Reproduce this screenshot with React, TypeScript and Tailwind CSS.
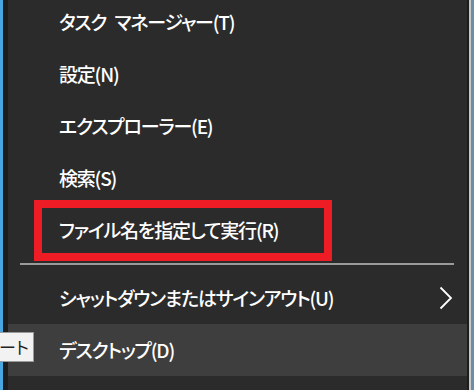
import React from "react";

interface MenuItem {
    label: string;
    submenu?: boolean;
    active?: boolean;
}

const topItems: MenuItem[] = [
    { label: "タスク\u2002マネージャー(T)" },
    { label: "設定(N)" },
    { label: "エクスプローラー(E)" },
    { label: "検索(S)" },
    { label: "ファイル名を指定して実行(R)" },
];

const bottomItems: MenuItem[] = [
    { label: "シャットダウンまたはサインアウト(U)", submenu: true },
    { label: "デスクトップ(D)", active: true },
];

function Row({ item }: { item: MenuItem }) {
    return (
        <div
            className={`flex h-[52px] items-center justify-between pl-[51px] pr-[14px] ${item.active ? "bg-[#3e3e3e]" : ""
                }`}
        >
            <span className="whitespace-nowrap">{item.label}</span>
            {item.submenu && (
                <svg width="14" height="24" viewBox="0 0 14 24" fill="none" className="shrink-0">
                    <path d="M1.5 1.5 L12 12 L1.5 22.5" stroke="#ffffff" strokeWidth="1.8" />
                </svg>
            )}
        </div>
    );
}

export default function App() {
    return (
        <div className="relative flex h-[390px] w-[474px] overflow-hidden bg-[#2b2b2b] font-['Noto_Sans_CJK_JP',sans-serif] text-[19px] font-medium tracking-[-1.2px] text-white [font-feature-settings:'palt']">
            {/* left window edge */}
            <div className="w-[3px] bg-[#4aa6e0]" />

            {/* context menu */}
            <div className="flex flex-1 flex-col border-l-[5px] border-r-[2px] border-l-[#1d1d1d] border-r-[#1d1d1d] bg-[#2b2b2b]">
                <div className="-mt-[4px]">
                    {topItems.map((item) => (
                        <Row key={item.label} item={item} />
                    ))}
                </div>

                {/* separator */}
                <div className="flex h-4 items-center pl-[12px] pr-[13px]">
                    <div className="h-[2px] w-full bg-[#9a9a9a]" />
                </div>

                <div>
                    {bottomItems.map((item) => (
                        <Row key={item.label} item={item} />
                    ))}
                </div>
            </div>

            {/* right window edge */}
            <div className="w-[2px] bg-[#c8c8c8]" />
            <div className="w-[3px] bg-[#6d8ea3]" />

            {/* annotation box */}
            <div className="absolute left-[34px] top-[200px] h-[61px] w-[298px] border-[8px] border-[#ee1c25]" />

            {/* tooltip peeking from the left */}
            <div className="absolute left-0 top-[332px] flex h-[30px] w-[34px] items-center justify-end overflow-hidden border border-l-0 border-[#9a9a9a] bg-[#f2f2f2] pr-[4px] text-[17px] font-normal tracking-normal text-[#222222]">
                <span className="whitespace-nowrap">ート</span>
            </div>
        </div>
    );
}
